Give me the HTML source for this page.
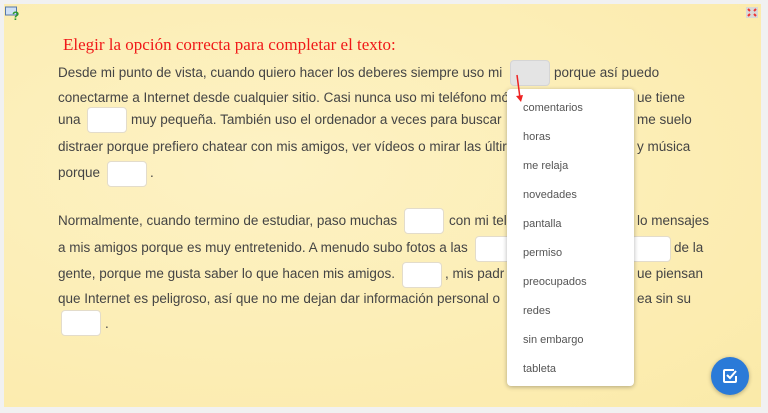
<!DOCTYPE html>
<html><head><meta charset="utf-8"><style>
body{margin:0;width:768px;height:413px;background:#f1f1f1;position:relative;overflow:hidden;font-family:"Liberation Sans",Arial,sans-serif}
#bg{position:absolute;left:4px;top:4px;width:757px;height:403px;background:radial-gradient(ellipse at 35% 40%,#fdf2c4,#fcecb0 75%,#faeaa8);}
.t{position:absolute;font-size:13.5px;color:#444;white-space:nowrap;line-height:16px}
.b{position:absolute;width:38px;height:24px;background:#fff;border:1px solid #e3dccb;border-radius:4px}
#dd{position:absolute;left:507px;top:89px;width:127px;height:297px;background:#fff;border-radius:4px;box-shadow:0 1px 5px rgba(0,0,0,.3)}
.i{position:absolute;left:16px;font-size:11px;color:#555}
</style></head><body>
<div id="bg"></div>
<svg style="position:absolute;left:5px;top:6px" width="16" height="14"><rect x="0.5" y="1" width="11" height="8" fill="#cfe0f5" stroke="#5577aa"/><text x="7" y="14" font-size="12" font-weight="bold" fill="#2e9a2e" font-family="Liberation Sans">?</text></svg>
<svg style="position:absolute;left:746px;top:7px" width="12" height="11"><rect width="12" height="11" fill="#d8d8d8"/><path d="M2 2L4 4M10 2L8 4M2 9L4 7M10 9L8 7" stroke="#e33" stroke-width="2"/></svg>
<div style="position:absolute;left:63px;top:35px;font-family:'Liberation Serif',serif;font-size:17px;color:#f01818;white-space:nowrap">Elegir la opción correcta para completar el texto:</div>

<div class="t" style="left:58px;top:65px">Desde mi punto de vista, cuando quiero hacer los deberes siempre uso mi</div>
<div class="b" style="left:510px;top:60px;background:#e4e4e4;border-color:#d5d5d5"></div>
<div class="t" style="left:554px;top:65px">porque así puedo</div>
<div class="t" style="left:58px;top:90px">conectarme a Internet desde cualquier sitio. Casi nunca uso mi teléfono mó</div>
<div class="t" style="left:637px;top:90px">ue tiene</div>
<div class="t" style="left:58px;top:112px">una</div>
<div class="b" style="left:87px;top:107px"></div>
<div class="t" style="left:131px;top:112px">muy pequeña. También uso el ordenador a veces para buscar</div>
<div class="t" style="left:637px;top:112px">me suelo</div>
<div class="t" style="left:58px;top:139px">distraer porque prefiero chatear con mis amigos, ver vídeos o mirar las últir</div>
<div class="t" style="left:637px;top:139px">y música</div>
<div class="t" style="left:58px;top:165px">porque</div>
<div class="b" style="left:107px;top:161px"></div>
<div class="t" style="left:150px;top:165px">.</div>

<div class="t" style="left:58px;top:213px">Normalmente, cuando termino de estudiar, paso muchas</div>
<div class="b" style="left:404px;top:208px"></div>
<div class="t" style="left:449px;top:213px">con mi tel</div>
<div class="t" style="left:637px;top:213px">lo mensajes</div>
<div class="t" style="left:58px;top:240px">a mis amigos porque es muy entretenido. A menudo subo fotos a las</div>
<div class="b" style="left:475px;top:236px"></div>
<div class="b" style="left:631px;top:236px"></div>
<div class="t" style="left:674px;top:240px">de la</div>
<div class="t" style="left:58px;top:266px">gente, porque me gusta saber lo que hacen mis amigos.</div>
<div class="b" style="left:402px;top:262px"></div>
<div class="t" style="left:445px;top:266px">, mis padr</div>
<div class="t" style="left:637px;top:266px">ue piensan</div>
<div class="t" style="left:58px;top:291px">que Internet es peligroso, así que no me dejan dar información personal o</div>
<div class="t" style="left:637px;top:291px">ea sin su</div>
<div class="b" style="left:61px;top:310px"></div>
<div class="t" style="left:105px;top:316px">.</div>

<div id="dd">
<div class="i" style="top:13px">comentarios</div>
<div class="i" style="top:42px">horas</div>
<div class="i" style="top:71px">me relaja</div>
<div class="i" style="top:100px">novedades</div>
<div class="i" style="top:129px">pantalla</div>
<div class="i" style="top:158px">permiso</div>
<div class="i" style="top:187px">preocupados</div>
<div class="i" style="top:216px">redes</div>
<div class="i" style="top:245px">sin embargo</div>
<div class="i" style="top:274px">tableta</div>
</div>
<svg style="position:absolute;left:514px;top:74px" width="12" height="30"><path d="M3 1L6 24" stroke="#e22" stroke-width="1.5"/><path d="M2 22L7 28L9 21Z" fill="#e22"/></svg>

<div style="position:absolute;left:711px;top:357px;width:38px;height:38px;border-radius:50%;background:#2a7ad8;box-shadow:0 1px 4px rgba(0,0,0,.3)"></div>
<svg style="position:absolute;left:721px;top:367px" width="18" height="18"><path d="M13 3H4Q3 3 3 4V14Q3 15 4 15H14Q15 15 15 14V9" fill="none" stroke="#fff" stroke-width="2"/><path d="M6 8L9 11L15 4" fill="none" stroke="#fff" stroke-width="2"/></svg>
</body></html>
